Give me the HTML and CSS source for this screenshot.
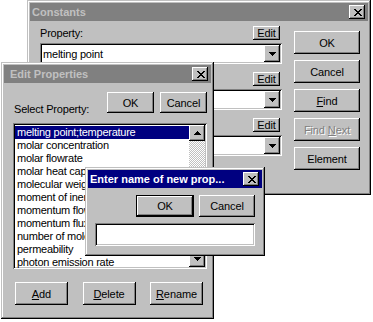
FILE: index.html
```html
<!DOCTYPE html>
<html>
<head>
<meta charset="utf-8">
<link rel="stylesheet" href="styles.css">
</head>
<body>
<div class="desk">

  <section class="win constants">
    <div class="title">
      <span class="title-text">Constants</span>
      <button class="close"><svg width="8" height="7" viewBox="0 0 8 7"><path d="M0 0h2v1H0zM6 0h2v1H6zM1 1h2v1H1zM5 1h2v1H5zM2 2h4v1H2zM3 3h2v1H3zM2 4h4v1H2zM1 5h2v1H1zM5 5h2v1H5zM0 6h2v1H0zM6 6h2v1H6z" fill="#000"/></svg></button>
    </div>
    <div class="c-body">
      <div class="fields">
        <div class="field">
          <div class="field-head"><span class="label">Property:</span><button class="btn small">Edit</button></div>
          <div class="combo"><span class="combo-text">melting point</span><span class="drop"><svg width="7" height="4" viewBox="0 0 7 4"><path d="M0 0h7v1H0zM1 1h5v1H1zM2 2h3v1H2zM3 3h1v1H3z" fill="#000"/></svg></span></div>
        </div>
        <div class="field">
          <div class="field-head"><span class="label"></span><button class="btn small">Edit</button></div>
          <div class="combo"><span class="combo-text"></span><span class="drop"><svg width="7" height="4" viewBox="0 0 7 4"><path d="M0 0h7v1H0zM1 1h5v1H1zM2 2h3v1H2zM3 3h1v1H3z" fill="#000"/></svg></span></div>
        </div>
        <div class="field">
          <div class="field-head"><span class="label"></span><button class="btn small">Edit</button></div>
          <div class="combo"><span class="combo-text"></span><span class="drop"><svg width="7" height="4" viewBox="0 0 7 4"><path d="M0 0h7v1H0zM1 1h5v1H1zM2 2h3v1H2zM3 3h1v1H3z" fill="#000"/></svg></span></div>
        </div>
      </div>
      <div class="actions">
        <button class="btn wide">OK</button>
        <button class="btn wide">Cancel</button>
        <button class="btn wide"><span><u>F</u>ind</span></button>
        <button class="btn wide disabled"><span>Find <u>N</u>ext</span></button>
        <button class="btn wide">Element</button>
      </div>
    </div>
  </section>

  <section class="win props">
    <div class="title title-indent">
      <span class="title-text">Edit Properties</span>
      <button class="close"><svg width="8" height="7" viewBox="0 0 8 7"><path d="M0 0h2v1H0zM6 0h2v1H6zM1 1h2v1H1zM5 1h2v1H5zM2 2h4v1H2zM3 3h2v1H3zM2 4h4v1H2zM1 5h2v1H1zM5 5h2v1H5zM0 6h2v1H0zM6 6h2v1H6z" fill="#000"/></svg></button>
    </div>
    <div class="p-body">
      <div class="p-top">
        <span class="p-label">Select Property:</span>
        <button class="btn mid">OK</button>
        <button class="btn mid">Cancel</button>
      </div>
      <div class="list">
        <div class="items">
          <div class="item sel">melting point;temperature</div>
          <div class="item">molar concentration</div>
          <div class="item">molar flowrate</div>
          <div class="item">molar heat capacity</div>
          <div class="item">molecular weight</div>
          <div class="item">moment of inertia</div>
          <div class="item">momentum flow</div>
          <div class="item">momentum flux</div>
          <div class="item">number of moles</div>
          <div class="item">permeability</div>
          <div class="item">photon emission rate</div>
        </div>
        <div class="scroll">
          <span class="sbtn"><svg width="7" height="4" viewBox="0 0 7 4"><path d="M3 0h1v1H3zM2 1h3v1H2zM1 2h5v1H1zM0 3h7v1H0z" fill="#000"/></svg></span>
          <span class="sbtn"><svg width="7" height="4" viewBox="0 0 7 4"><path d="M0 0h7v1H0zM1 1h5v1H1zM2 2h3v1H2zM3 3h1v1H3z" fill="#000"/></svg></span>
        </div>
      </div>
      <div class="p-actions">
        <button class="btn bottom"><span><u>A</u>dd</span></button>
        <button class="btn bottom"><span><u>D</u>elete</span></button>
        <button class="btn bottom"><span><u>R</u>ename</span></button>
      </div>
    </div>
  </section>

  <section class="win newprop">
    <div class="title active">
      <span class="title-text">Enter name of new prop...</span>
      <button class="close"><svg width="8" height="7" viewBox="0 0 8 7"><path d="M0 0h2v1H0zM6 0h2v1H6zM1 1h2v1H1zM5 1h2v1H5zM2 2h4v1H2zM3 3h2v1H3zM2 4h4v1H2zM1 5h2v1H1zM5 5h2v1H5zM0 6h2v1H0zM6 6h2v1H6z" fill="#000"/></svg></button>
    </div>
    <div class="n-body">
      <div class="n-buttons">
        <button class="btn dlg default">OK</button>
        <button class="btn dlg">Cancel</button>
      </div>
      <div class="textbox"></div>
    </div>
  </section>

</div>
</body>
</html>
```

FILE: styles.css
```css
* {
  box-sizing: border-box;
}

body {
  margin: 0;
  background: #fff;
  font: 11px "Liberation Sans", Arial, sans-serif;
  color: #000;
}

.desk {
  position: relative;
  width: 373px;
  height: 322px;
  overflow: hidden;
}

.win {
  position: absolute;
  background: #c0c0c0;
  padding: 3px;
  box-shadow: inset -1px -1px #000, inset 1px 1px #c0c0c0, inset -2px -2px #808080, inset 2px 2px #fff;
}

.constants {
  left: 27px;
  top: 0;
  width: 344px;
  height: 195px;
}

.props {
  left: 1px;
  top: 62px;
  width: 213px;
  height: 257px;
}

.newprop {
  left: 85px;
  top: 167px;
  width: 180px;
  height: 89px;
}

.title {
  height: 18px;
  display: flex;
  align-items: center;
  justify-content: space-between;
  background: #808080;
  color: #c0c0c0;
  font-weight: bold;
  padding: 0 3px 0 2px;
}

.title-indent {
  padding-left: 6px;
}

.title.active {
  background: #000080;
  color: #fff;
}

.title-text {
  line-height: 18px;
  white-space: nowrap;
}

button {
  font: inherit;
  color: inherit;
  border: 0;
  padding: 0;
  margin: 0;
  background: #c0c0c0;
  appearance: none;
}

.close,
.btn,
.drop,
.sbtn {
  background: #c0c0c0;
  color: #000;
  box-shadow: inset -1px -1px #000, inset 1px 1px #fff, inset -2px -2px #808080;
}

.close {
  width: 16px;
  height: 14px;
  display: flex;
  align-items: center;
  justify-content: center;
  padding-top: 1px;
  padding-left: 1px;
}

.close svg,
.drop svg,
.sbtn svg {
  display: block;
}

.btn {
  display: flex;
  align-items: center;
  justify-content: center;
  white-space: nowrap;
  font-weight: normal;
  letter-spacing: -0.1px;
}

.btn u {
  text-decoration: underline;
}

/* Constants */
.c-body {
  display: flex;
  gap: 12px;
  padding: 5px 8px 0 10px;
}

.fields {
  width: 242px;
  display: flex;
  flex-direction: column;
  gap: 8px;
}

.field-head {
  display: flex;
  justify-content: space-between;
  align-items: flex-end;
  height: 14px;
  margin-bottom: 3px;
  padding-right: 2px;
  line-height: 13px;
}

.label {
  letter-spacing: -0.2px;
}

.small {
  width: 27px;
  height: 14px;
}

.combo {
  height: 21px;
  background: #fff;
  box-shadow: inset 1px 1px #808080, inset -1px -1px #fff, inset 2px 2px #000, inset -2px -2px #c0c0c0;
  display: flex;
  align-items: center;
  padding: 2px;
}

.combo-text {
  flex: 1;
  padding-left: 1px;
  letter-spacing: -0.2px;
}

.drop {
  width: 16px;
  height: 17px;
  display: flex;
  align-items: center;
  justify-content: center;
  padding-top: 1px;
}

.actions {
  display: flex;
  flex-direction: column;
  gap: 6px;
  padding-top: 5px;
  width: 66px;
}

.wide {
  width: 66px;
  height: 23px;
}

.disabled {
  color: #808080;
  text-shadow: 1px 1px #fff;
}

/* Edit Properties */
.p-body {
  padding: 9px 4px 0 9px;
}

.p-top {
  display: flex;
  align-items: flex-end;
  gap: 6px;
}

.p-label {
  flex: 1;
  padding-left: 1px;
  line-height: 13px;
  margin-bottom: -3px;
  letter-spacing: -0.2px;
}

.mid {
  width: 47px;
  height: 21px;
}

.list {
  margin-top: 10px;
  height: 146px;
  background: #fff;
  box-shadow: inset 1px 1px #808080, inset -1px -1px #fff, inset 2px 2px #000, inset -2px -2px #c0c0c0;
  display: flex;
  padding: 2px;
}

.items {
  flex: 1;
  min-width: 0;
  padding-top: 1px;
}

.item {
  height: 13px;
  line-height: 13px;
  padding-left: 2px;
  white-space: nowrap;
  overflow: hidden;
  letter-spacing: -0.25px;
}

.item.sel {
  background: #000080;
  color: #fff;
}

.scroll {
  width: 16px;
  display: flex;
  flex-direction: column;
  justify-content: space-between;
  background-color: #fff;
  background-image: conic-gradient(#c0c0c0 25%, #fff 0 50%, #c0c0c0 0 75%, #fff 0);
  background-size: 2px 2px;
}

.sbtn {
  width: 16px;
  height: 16px;
  display: flex;
  align-items: center;
  justify-content: center;
}

.p-actions {
  display: flex;
  justify-content: space-between;
  padding: 13px 4px 0 2px;
}

.bottom {
  width: 53px;
  height: 23px;
}

/* New property dialog */
.n-body {
  padding: 7px 7px 0 7px;
}

.n-buttons {
  display: flex;
  justify-content: flex-end;
  gap: 5px;
}

.dlg {
  width: 56px;
  height: 22px;
}

.dlg.default {
  width: 58px;
  box-shadow: inset 0 0 0 1px #000, inset -2px -2px #000, inset 2px 2px #fff, inset -3px -3px #808080;
}

.textbox {
  margin-top: 6px;
  height: 23px;
  background: #fff;
  box-shadow: inset 1px 1px #808080, inset -1px -1px #fff, inset 2px 2px #000, inset -2px -2px #c0c0c0;
}
```
